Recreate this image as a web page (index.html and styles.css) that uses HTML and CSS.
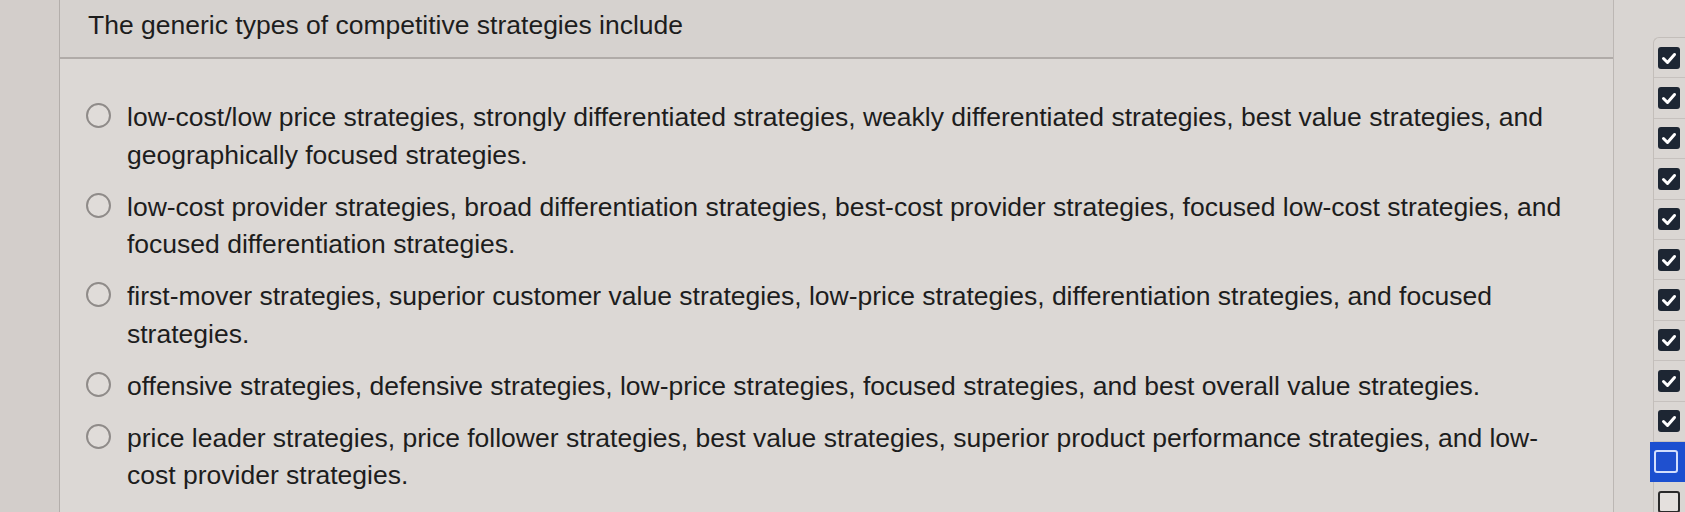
FILE: index.html
```html
<!DOCTYPE html>
<html lang="en">
<head>
<meta charset="utf-8">
<title>Question</title>
<link rel="stylesheet" href="styles.css">
</head>
<body>
<div class="page">
  <div class="leftbar"></div>
  <main class="main">
    <div class="header">The generic types of competitive strategies include</div>
    <div class="options">
      <label class="option"><span class="radio"></span><span class="text">low-cost/low price strategies, strongly differentiated strategies, weakly differentiated strategies, best value strategies, and geographically focused strategies.</span></label>
      <label class="option"><span class="radio"></span><span class="text">low-cost provider strategies, broad differentiation strategies, best-cost provider strategies, focused low-cost strategies, and focused differentiation strategies.</span></label>
      <label class="option"><span class="radio"></span><span class="text">first-mover strategies, superior customer value strategies, low-price strategies, differentiation strategies, and focused strategies.</span></label>
      <label class="option"><span class="radio"></span><span class="text">offensive strategies, defensive strategies, low-price strategies, focused strategies, and best overall value strategies.</span></label>
      <label class="option"><span class="radio"></span><span class="text">price leader strategies, price follower strategies, best value strategies, superior product performance strategies, and low-cost provider strategies.</span></label>
    </div>
  </main>
  <aside class="sidebar">
    <ul class="qlist">
      <li class="qrow"><span class="cb checked"><svg viewBox="0 0 22 22"><path d="M5.5 11.5 L9.5 15.5 L16.5 7.5"/></svg></span></li>
      <li class="qrow"><span class="cb checked"><svg viewBox="0 0 22 22"><path d="M5.5 11.5 L9.5 15.5 L16.5 7.5"/></svg></span></li>
      <li class="qrow"><span class="cb checked"><svg viewBox="0 0 22 22"><path d="M5.5 11.5 L9.5 15.5 L16.5 7.5"/></svg></span></li>
      <li class="qrow"><span class="cb checked"><svg viewBox="0 0 22 22"><path d="M5.5 11.5 L9.5 15.5 L16.5 7.5"/></svg></span></li>
      <li class="qrow"><span class="cb checked"><svg viewBox="0 0 22 22"><path d="M5.5 11.5 L9.5 15.5 L16.5 7.5"/></svg></span></li>
      <li class="qrow"><span class="cb checked"><svg viewBox="0 0 22 22"><path d="M5.5 11.5 L9.5 15.5 L16.5 7.5"/></svg></span></li>
      <li class="qrow"><span class="cb checked"><svg viewBox="0 0 22 22"><path d="M5.5 11.5 L9.5 15.5 L16.5 7.5"/></svg></span></li>
      <li class="qrow"><span class="cb checked"><svg viewBox="0 0 22 22"><path d="M5.5 11.5 L9.5 15.5 L16.5 7.5"/></svg></span></li>
      <li class="qrow"><span class="cb checked"><svg viewBox="0 0 22 22"><path d="M5.5 11.5 L9.5 15.5 L16.5 7.5"/></svg></span></li>
      <li class="qrow"><span class="cb checked"><svg viewBox="0 0 22 22"><path d="M5.5 11.5 L9.5 15.5 L16.5 7.5"/></svg></span></li>
      <li class="qrow current"><span class="cb active"></span></li>
      <li class="qrow"><span class="cb empty"></span></li>
    </ul>
  </aside>
</div>
</body>
</html>
```
FILE: styles.css
```css
html, body {
  margin: 0;
  padding: 0;
  height: 512px;
  overflow: hidden;
}
body {
  background: #d9d5d2;
  font-family: "Liberation Sans", Arial, sans-serif;
  color: #1d1d1d;
}
.page {
  display: flex;
  height: 512px;
}
.leftbar {
  width: 59px;
  flex: none;
  background: #d3cecb;
  border-right: 1px solid #b3aeab;
}
.main {
  width: 1553px;
  flex: none;
  background: #dcd8d5;
  border-right: 1px solid #bcb7b4;
  display: flex;
  flex-direction: column;
}
.header {
  box-sizing: border-box;
  height: 59px;
  padding: 10px 0 0 28px;
  font-size: 26.5px;
  line-height: 30px;
  background: #d6d2cf;
  border-bottom: 2px solid #b0aba8;
}
.options {
  display: flex;
  flex-direction: column;
  gap: 14.5px;
  padding: 40px 42px 0 26px;
}
.option {
  display: flex;
  align-items: flex-start;
  gap: 16px;
  font-size: 26.5px;
  line-height: 37.5px;
}
.radio {
  flex: none;
  box-sizing: border-box;
  width: 25px;
  height: 25px;
  margin-top: 4px;
  border-radius: 50%;
  border: 2px solid #8f8b89;
  background: #e0dcd9;
}
.text {
  flex: 1;
}
.sidebar {
  flex: 1;
  background: #d9d5d2;
  padding: 37px 0 0 39px;
}
.qlist {
  list-style: none;
  margin: 0;
  padding: 0;
  border-left: 1px solid #c3beba;
  border-top: 1px solid #c3beba;
  border-top-left-radius: 6px;
  background: #dad6d3;
}
.qrow {
  box-sizing: border-box;
  height: 40.4px;
  border-bottom: 1px solid #c6c1be;
  display: flex;
  align-items: center;
  padding-left: 4px;
}
.qrow.current {
  background: #1b4fd0;
  border-bottom-color: #1b4fd0;
  padding-left: 0;
  margin-left: -4px;
  padding-left: 4px;
}
.cb {
  box-sizing: border-box;
  width: 22px;
  height: 22px;
  border-radius: 3px;
  flex: none;
  display: block;
}
.cb.checked {
  background: #1d2633;
}
.cb svg {
  display: block;
  width: 22px;
  height: 22px;
}
.cb svg path {
  fill: none;
  stroke: #ffffff;
  stroke-width: 3;
  stroke-linecap: round;
  stroke-linejoin: round;
}
.cb.active {
  width: 24px;
  height: 23px;
  border: 2.5px solid #d3defc;
  background: #1f50cf;
}
.cb.empty {
  border: 2px solid #2a2a2a;
  background: #e4e0dd;
}
```
